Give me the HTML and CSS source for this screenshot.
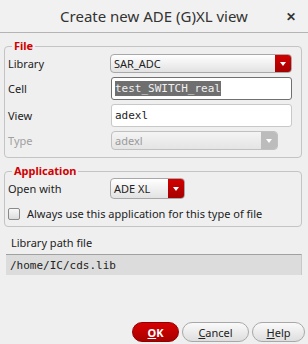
FILE: index.html
```html
<!DOCTYPE html>
<html lang="en">
<head>
    <meta charset="UTF-8">
    <title>Create new ADE (G)XL view</title>
    <link rel="stylesheet" href="styles.css">
</head>
<body>
    <div class="titlebar">
        <span class="title">Create new ADE (G)XL view</span>
        <span class="close">&#x2715;</span>
    </div>
    <div class="content">
        <fieldset class="group file-group">
            <legend>File</legend>
            <label class="lbl">Library</label>
            <div class="combo">
                <span class="combo-text">SAR_ADC</span>
                <span class="arrow red"><span class="tri"></span></span>
            </div>
            <label class="lbl">Cell</label>
            <div class="field focus"><span class="sel">test_SWITCH_real</span></div>
            <label class="lbl">View</label>
            <div class="field">adexl</div>
            <label class="lbl disabled">Type</label>
            <div class="combo type-combo disabled">
                <span class="combo-text">adexl</span>
                <span class="arrow grey"><span class="tri"></span></span>
            </div>
        </fieldset>

        <fieldset class="group app-group">
            <legend>Application</legend>
            <div class="app-row">
                <label class="lbl">Open with</label>
                <div class="combo app-combo">
                    <span class="combo-text">ADE XL</span>
                    <span class="arrow red"><span class="tri"></span></span>
                </div>
            </div>
            <div class="check-row">
                <span class="checkbox"></span>
                <span>Always use this application for this type of file</span>
            </div>
        </fieldset>

        <div class="path-label">Library path file</div>
        <div class="path-field">/home/IC/cds.lib</div>
    </div>
    <div class="buttons">
        <button class="btn ok"><u>O</u>K</button>
        <button class="btn cancel"><u>C</u>ancel</button>
        <button class="btn help"><u>H</u>elp</button>
    </div>
</body>
</html>
```

FILE: styles.css
```css
body {
    margin: 0;
    width: 308px;
    height: 344px;
    background: #efefef;
    font-family: "Noto Sans", sans-serif;
    font-size: 11px;
    color: #222;
    overflow: hidden;
    display: flex;
    flex-direction: column;
}
.titlebar {
    height: 32px;
    flex-shrink: 0;
    border-bottom: 1px solid #b4b4b4;
    background: #f1f1f1;
    display: flex;
    align-items: center;
    position: relative;
}
.title {
    flex: 1;
    text-align: center;
    font-size: 15px;
    color: #333;
}
.close {
    position: absolute;
    right: 12px;
    top: 8px;
    font-size: 12px;
    font-weight: bold;
    color: #333;
}
.content {
    padding: 6px 6px 0 4px;
}
.group {
    margin: 0;
    border: 1px solid #c4c4c4;
    border-radius: 4px;
    padding: 1px 0 7px 0;
}
.group legend {
    color: #d00000;
    font-weight: bold;
    font-size: 11px;
    padding: 0 2px;
    margin-left: 7px;
    line-height: 14px;
}
.file-group {
    display: grid;
    grid-template-columns: 105px 182px;
    row-gap: 4px;
    align-items: center;
}
.lbl {
    padding-left: 3px;
}
.lbl.disabled {
    color: #a0a0a0;
}
.combo {
    height: 19px;
    box-sizing: border-box;
    border: 1px solid #a8a8a8;
    border-radius: 4px;
    background: linear-gradient(#ffffff, #e2e2e2);
    display: flex;
    align-items: center;
    overflow: hidden;
}
.combo-text {
    flex: 1;
    padding-left: 3px;
}
.arrow {
    width: 16px;
    height: 100%;
    display: flex;
    align-items: center;
    justify-content: center;
}
.arrow.red {
    background: linear-gradient(#d20000, #a50000);
}
.arrow.grey {
    background: #bcbcbc;
}
.tri {
    width: 0;
    height: 0;
    border-left: 3px solid transparent;
    border-right: 3px solid transparent;
    border-top: 4px solid #fff;
}
.type-combo {
    width: 167px;
    margin-left: 1px;
}
.combo.disabled {
    color: #9a9a9a;
    background: linear-gradient(#f4f4f4, #e4e4e4);
    border-color: #c0c0c0;
}
.field {
    height: 23px;
    box-sizing: border-box;
    margin-left: 1px;
    border: 1px solid #c8c8c8;
    border-radius: 3px;
    background: #fff;
    font-family: "DejaVu Sans Mono", monospace;
    font-size: 11px;
    display: flex;
    align-items: center;
    padding-left: 3px;
}
.field.focus {
    border-color: #707070;
}
.sel {
    background: #6f6f6f;
    color: #f0f0f0;
    padding: 1px 0;
}
.app-group {
    margin-top: 6px;
    padding: 0 0 6px 0;
}
.app-row {
    display: flex;
    align-items: center;
    height: 21px;
}
.app-row .lbl {
    width: 102px;
}
.app-combo {
    width: 75px;
    height: 21px;
}
.check-row {
    display: flex;
    align-items: center;
    gap: 7px;
    margin-top: 8px;
    padding-left: 3px;
    height: 13px;
}
.checkbox {
    width: 10px;
    height: 10px;
    border: 1px solid #8a8a8a;
    border-radius: 2px;
    background: linear-gradient(#f8f8f8, #dcdcdc);
}
.path-label {
    margin-top: 8px;
    padding-left: 7px;
}
.path-field {
    margin-top: 4px;
    margin-left: 2px;
    height: 21px;
    box-sizing: border-box;
    border-top: 1px solid #a0a0a0;
    border-right: 1px solid #c8c8c8;
    background: #dcdcdc;
    font-family: "DejaVu Sans Mono", monospace;
    font-size: 11px;
    display: flex;
    align-items: center;
    padding-left: 4px;
}
.buttons {
    display: flex;
    justify-content: flex-end;
    gap: 3px;
    padding: 0 3px 2px 0;
    margin-top: auto;
}
.btn {
    height: 20px;
    border-radius: 10px;
    border: 1px solid #a8a8a8;
    background: linear-gradient(#fafafa, #dedede);
    font-family: "Noto Sans", sans-serif;
    font-size: 11px;
    color: #222;
    padding: 0;
}
.btn.ok {
    width: 47px;
    background: linear-gradient(#d80000, #a80000);
    border-color: #900000;
    color: #fff;
    font-weight: bold;
}
.btn.cancel {
    width: 67px;
}
.btn.help {
    width: 53px;
}
```
